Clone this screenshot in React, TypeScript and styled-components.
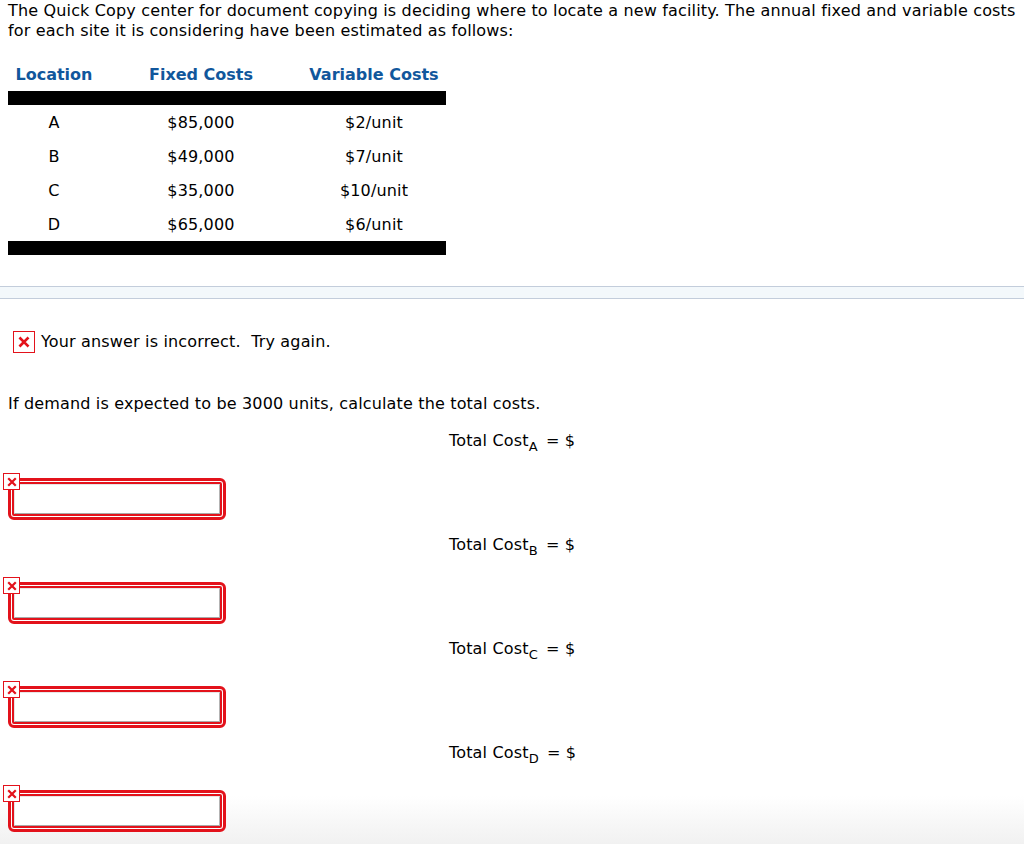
import { createGlobalStyle, styled } from 'styled-components';

const rows = [
  { loc: 'A', fixed: '$85,000', variable: '$2/unit' },
  { loc: 'B', fixed: '$49,000', variable: '$7/unit' },
  { loc: 'C', fixed: '$35,000', variable: '$10/unit' },
  { loc: 'D', fixed: '$65,000', variable: '$6/unit' },
];

const XMark = ({ size }: { size: number }) => (
  <svg width={size} height={size} viewBox="0 0 10 10">
    <path d="M2 2 L8 8 M8 2 L2 8" stroke="#e3121b" strokeWidth="2.2" strokeLinecap="square" />
  </svg>
);

const App = () => {
  return (
    <>
      <GlobalStyle />
      <St.Page>
        <St.Intro>
          The Quick Copy center for document copying is deciding where to locate a new facility. The annual fixed and
          variable costs for each site it is considering have been estimated as follows:
        </St.Intro>

        <St.Table>
          <St.HeadCell>Location</St.HeadCell>
          <St.HeadCell>Fixed Costs</St.HeadCell>
          <St.HeadCell>Variable Costs</St.HeadCell>
          <St.Bar />
          {rows.map((r) => (
            <St.Row key={r.loc}>
              <St.Cell>{r.loc}</St.Cell>
              <St.Cell>{r.fixed}</St.Cell>
              <St.Cell>{r.variable}</St.Cell>
            </St.Row>
          ))}
          <St.Bar />
        </St.Table>
      </St.Page>

      <St.Divider />

      <St.Page>
        <St.Feedback>
          <St.FeedbackIcon>
            <XMark size={12} />
          </St.FeedbackIcon>
          Your answer is incorrect.&nbsp; Try again.
        </St.Feedback>

        <St.Question>If demand is expected to be 3000 units, calculate the total costs.</St.Question>

        {['A', 'B', 'C', 'D'].map((l) => (
          <St.Answer key={l}>
            <St.Label>
              Total Cost<St.Sub>{l}</St.Sub> = $
            </St.Label>
            <St.InputFrame>
              <St.WrongBadge>
                <XMark size={10} />
              </St.WrongBadge>
              <St.InputInner>
                <St.Input type="text" />
              </St.InputInner>
            </St.InputFrame>
          </St.Answer>
        ))}
      </St.Page>
    </>
  );
};

export default App;

const GlobalStyle = createGlobalStyle`
  html {
    min-height: 100%;
    background: linear-gradient(to bottom, #ffffff 0, #ffffff 796px, #f1f1f1 844px);
  }
  body {
    margin: 0;
    font-family: "DejaVu Sans", Verdana, sans-serif;
    font-size: 16px;
    letter-spacing: 0.16px;
    color: #000;
  }
`;

const St = {
  Page: styled.div`
    padding: 0 8px;
  `,
  Intro: styled.p`
    margin: 0;
    padding-top: 1px;
    line-height: 20px;
  `,
  Table: styled.div`
    display: grid;
    grid-template-columns: 92px 202px 144px;
    width: 438px;
    margin-top: 15px;
  `,
  HeadCell: styled.div`
    padding: 9px 0 6px;
    line-height: 20px;
    text-align: center;
    font-weight: bold;
    letter-spacing: 0;
    color: #11579c;
  `,
  Bar: styled.div`
    grid-column: 1 / -1;
    height: 14px;
    background: #000;
  `,
  Row: styled.div`
    display: contents;
  `,
  Cell: styled.div`
    box-sizing: border-box;
    height: 34px;
    padding-top: 1px;
    display: flex;
    align-items: center;
    justify-content: center;
  `,
  Divider: styled.div`
    margin-top: 31px;
    height: 11px;
    background: #f3f8fb;
    border-top: 1px solid #c3cddb;
    border-bottom: 1px solid #c3cddb;
  `,
  Feedback: styled.div`
    display: flex;
    align-items: center;
    gap: 6px;
    margin-top: 31px;
    margin-left: 5px;
    line-height: 22px;
    padding-top: 1px;
  `,
  FeedbackIcon: styled.span`
    box-sizing: border-box;
    width: 22px;
    height: 22px;
    margin-top: -1px;
    display: flex;
    align-items: center;
    justify-content: center;
    border: 1px solid #e3121b;
    background: #fff;
  `,
  Question: styled.p`
    margin: 41px 0 0;
    line-height: 20px;
  `,
  Answer: styled.div`
    margin-top: 17px;

    & + & {
      margin-top: 15px;
    }
  `,
  Label: styled.div`
    padding-left: 441px;
    line-height: 20px;
  `,
  Sub: styled.sub`
    font-size: 13px;
    vertical-align: -5px;
    line-height: 0;
    margin-right: 3px;
  `,
  InputFrame: styled.div`
    position: relative;
    box-sizing: border-box;
    width: 218px;
    height: 42px;
    margin-top: 27px;
    padding: 1px;
    border: 3px solid #e3121b;
    border-radius: 6px;
    background: #fff;
  `,
  InputInner: styled.div`
    box-sizing: border-box;
    height: 100%;
    border: 2px solid #e3121b;
    border-radius: 2px;
  `,
  Input: styled.input`
    box-sizing: border-box;
    display: block;
    width: 100%;
    height: 100%;
    margin: 0;
    padding: 2px 4px;
    border: 1px solid;
    border-color: #e6e6e6 #b3b3b3 #a9a9a9 #e6e6e6;
    background: #fff;
    font: inherit;
    outline: none;
  `,
  WrongBadge: styled.span`
    position: absolute;
    left: -8px;
    top: -8px;
    box-sizing: border-box;
    width: 17px;
    height: 17px;
    display: flex;
    align-items: center;
    justify-content: center;
    border: 1px solid #e3121b;
    background: #fff;
  `,
};
